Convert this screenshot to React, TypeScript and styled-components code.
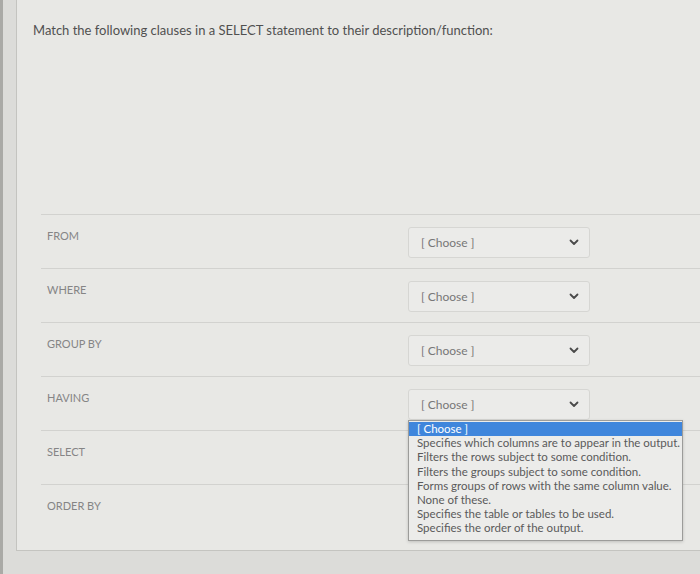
import styled, { createGlobalStyle } from "styled-components";

const clauses = ["FROM", "WHERE", "GROUP BY", "HAVING", "SELECT", "ORDER BY"];

const options = [
  "[ Choose ]",
  "Specifies which columns are to appear in the output.",
  "Filters the rows subject to some condition.",
  "Filters the groups subject to some condition.",
  "Forms groups of rows with the same column value.",
  "None of these.",
  "Specifies the table or tables to be used.",
  "Specifies the order of the output.",
];

const OPEN_ROW = 3;

const Chevron = () => (
  <svg width="10" height="7" viewBox="0 0 10 7" fill="none">
    <path
      d="M1.5 1.5 L5 5 L8.5 1.5"
      stroke="#4a4a4a"
      strokeWidth="1.8"
      strokeLinecap="round"
      strokeLinejoin="round"
    />
  </svg>
);

const App = () => {
  return (
    <>
      <GlobalStyle />
      <Page>
        <Panel>
          <Question>
            Match the following clauses in a SELECT statement to their
            description/function:
          </Question>
          <Answers>
            {clauses.map((clause, index) => (
              <Row key={clause} last={index === clauses.length - 1}>
                <Label>{clause}</Label>
                <SelectWrap>
                  <Select>
                    <SelectText>[ Choose ]</SelectText>
                    <Chevron />
                  </Select>
                  {index === OPEN_ROW && (
                    <Menu>
                      {options.map((option, i) => (
                        <Option key={option} active={i === 0}>
                          {option}
                        </Option>
                      ))}
                    </Menu>
                  )}
                </SelectWrap>
              </Row>
            ))}
          </Answers>
        </Panel>
      </Page>
    </>
  );
};

const GlobalStyle = createGlobalStyle`
  html, body {
    margin: 0;
    padding: 0;
    background: #dcdcd9;
  }
  body {
    font-family: Lato, "Open Sans", sans-serif;
  }
`;

const Page = styled.div`
  height: 574px;
  box-sizing: border-box;
  border-left: 3px solid #aaaaa6;
  padding-left: 13px;
  overflow: hidden;
`;

const Panel = styled.div`
  background: #e8e8e5;
  border-left: 1px solid #c4c4c0;
  border-bottom: 1px solid #c4c4c0;
  height: 551px;
  box-sizing: border-box;
  padding: 22px 0 0 16px;
  display: flex;
  flex-direction: column;
`;

const Question = styled.p`
  margin: 0;
  font-size: 13px;
  line-height: 16px;
  color: #505050;
`;

const Answers = styled.div`
  margin-top: 176px;
  margin-left: 8px;
`;

const Row = styled.div<{ last?: boolean }>`
  display: flex;
  justify-content: space-between;
  border-top: 1px solid #d2d2cf;
  height: ${(p) => (p.last ? "64px" : "53px")};
`;

const Label = styled.div`
  padding: 14px 0 0 6px;
  font-size: 11px;
  line-height: 14px;
  color: #858585;
`;

const SelectWrap = styled.div`
  position: relative;
  width: 292px;
  padding-top: 12px;
`;

const Select = styled.div`
  width: 182px;
  height: 31px;
  box-sizing: border-box;
  border: 1px solid #d6d6d3;
  border-radius: 3px;
  background: #ebebe9;
  display: flex;
  align-items: center;
  justify-content: space-between;
  padding: 0 10px 0 12px;
`;

const SelectText = styled.span`
  font-size: 12px;
  color: #777777;
`;

const Menu = styled.div`
  position: absolute;
  z-index: 10;
  top: 43px;
  left: 0;
  width: 275px;
  box-sizing: border-box;
  border: 1px solid #9c9c9a;
  background: #ececea;
  box-shadow: 0 1px 3px rgba(0, 0, 0, 0.18);
  padding: 1px 0 4px;
`;

const Option = styled.div<{ active?: boolean }>`
  font-size: 11.5px;
  line-height: 14.2px;
  padding: 0 8px;
  white-space: nowrap;
  color: ${(p) => (p.active ? "#ffffff" : "#5a5a5a")};
  background: ${(p) => (p.active ? "#3f86dc" : "transparent")};
`;

export default App;
